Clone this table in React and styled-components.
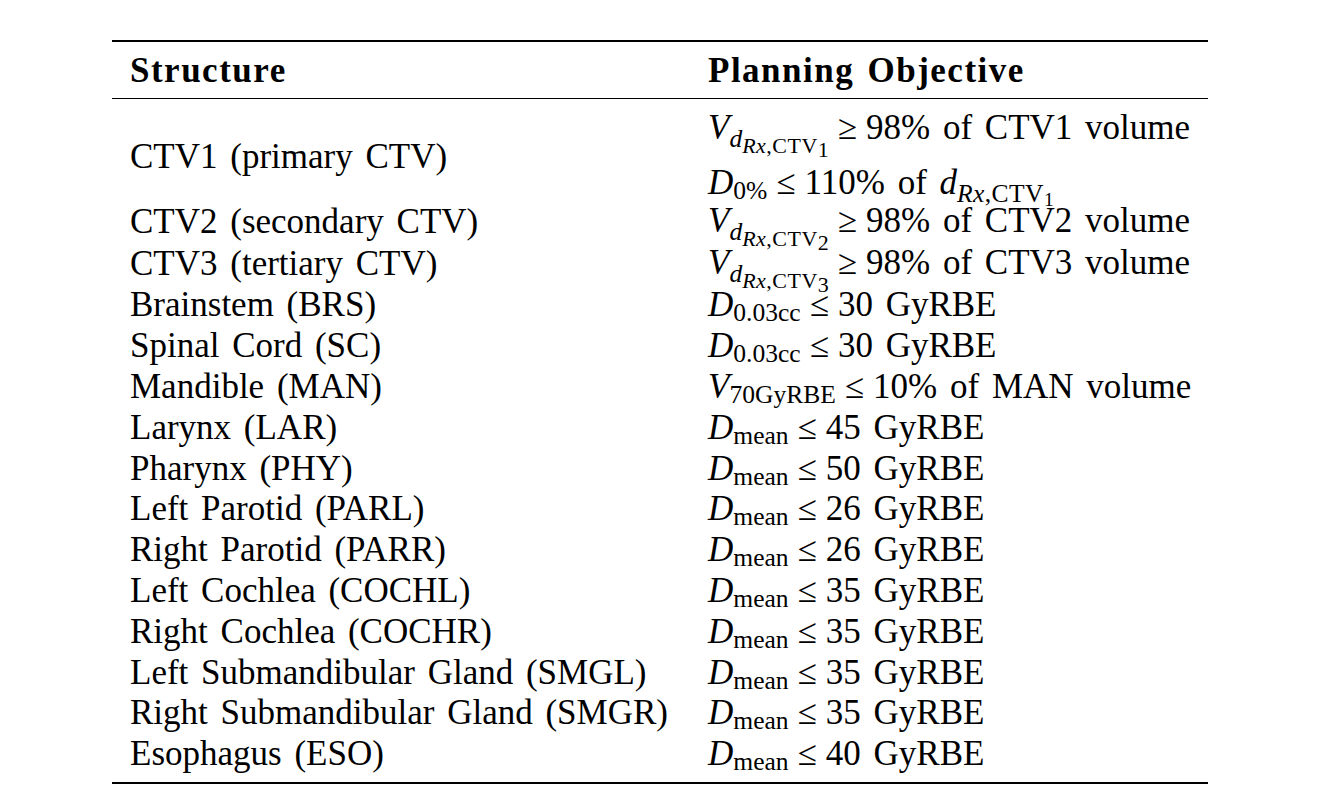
import React from "react";
import styled, { createGlobalStyle } from "styled-components";

const SERIF = `"Liberation Serif", "Times New Roman", Times, serif`;

const Global = createGlobalStyle`
  html, body { margin: 0; padding: 0; background: #fff; }
  body {
    font-family: ${SERIF};
    color: #000;
  }
`;

const Page = styled.div`
  padding: 40px 0 0 112px;
`;

const Table = styled.div`
  width: 1096px;
  border-top: 2px solid #000;
  border-bottom: 2px solid #000;
  font-family: ${SERIF};
  font-size: 35px;
`;

const HeadRow = styled.div`
  display: grid;
  grid-template-columns: 596px 1fr;
  padding: 8px 0 7px;
  line-height: 41px;
  border-bottom: 1px solid #000;
`;

const Body = styled.div`
  padding: 9px 0 7px;
`;

const Row = styled.div`
  display: grid;
  grid-template-columns: 596px 1fr;
  line-height: 40.8px;
  margin-bottom: ${(p) => (p.$tight ? "-3px" : "0")};
`;

const NameCell = styled.div`
  padding-left: 18px;
  padding-top: ${(p) => p.$shift || 0}px;
  white-space: nowrap;
  align-self: center;
`;

const HeadCell = styled.div`
  padding-left: ${(p) => (p.$first ? "18px" : "0")};
  white-space: nowrap;
`;

const ObjCell = styled.div`
  display: flex;
  flex-direction: column;
  gap: 13px;
  white-space: nowrap;
`;

const Line = styled.div``;

/* upright running text */
const Txt = styled.span`
  font-style: normal;
  font-weight: ${(p) => (p.$bold ? 700 : 400)};
  word-spacing: ${(p) => (p.$bold ? "3px" : "4px")};
  letter-spacing: ${(p) => (p.$bold ? "1.5px" : "0")};
`;

const I = styled.span`
  font-style: italic;
`;

const Sub = styled.span`
  font-size: ${(p) => p.$size || 0.73}em;
  vertical-align: ${(p) => p.$drop || -0.2}em;
  letter-spacing: ${(p) => p.$track || 0}px;
  line-height: 0;
`;

const Rel = styled.span`
  margin: 0 9px;
`;

const Vd = ({ n }) => (
  <>
    <I>V</I>
    <Sub $drop={-0.3}>
      <I>d</I>
      <Sub $size={0.86} $drop={-0.3} $track={0.5}>
        <I>Rx</I>,CTV
        <Sub $size={1} $drop={-0.18}>
          {n}
        </Sub>
      </Sub>
    </Sub>
  </>
);

const Dmean = ({ v }) => (
  <>
    <I>D</I>
    <Sub>mean</Sub>
    <Rel>≤</Rel>
    <Txt>{v} GyRBE</Txt>
  </>
);

const D003 = ({ v }) => (
  <>
    <I>D</I>
    <Sub>0.03cc</Sub>
    <Rel>≤</Rel>
    <Txt>{v} GyRBE</Txt>
  </>
);

const Coverage = ({ n }) => (
  <>
    <Vd n={n} />
    <Rel>≥</Rel>
    <Txt>98% of CTV{n} volume</Txt>
  </>
);

const rows = [
  { name: "CTV2 (secondary CTV)", obj: <Coverage n={2} /> },
  { name: "CTV3 (tertiary CTV)", obj: <Coverage n={3} /> },
  { name: "Brainstem (BRS)", obj: <D003 v={30} /> },
  { name: "Spinal Cord (SC)", obj: <D003 v={30} /> },
  {
    name: "Mandible (MAN)",
    obj: (
      <>
        <I>V</I>
        <Sub>70GyRBE</Sub>
        <Rel>≤</Rel>
        <Txt>10% of MAN volume</Txt>
      </>
    ),
  },
  { name: "Larynx (LAR)", obj: <Dmean v={45} /> },
  { name: "Pharynx (PHY)", obj: <Dmean v={50} /> },
  { name: "Left Parotid (PARL)", obj: <Dmean v={26} /> },
  { name: "Right Parotid (PARR)", obj: <Dmean v={26} /> },
  { name: "Left Cochlea (COCHL)", obj: <Dmean v={35} /> },
  { name: "Right Cochlea (COCHR)", obj: <Dmean v={35} /> },
  { name: "Left Submandibular Gland (SMGL)", obj: <Dmean v={35} /> },
  { name: "Right Submandibular Gland (SMGR)", obj: <Dmean v={35} /> },
  { name: "Esophagus (ESO)", obj: <Dmean v={40} /> },
];

export default function App() {
  return (
    <>
      <Global />
      <Page>
        <Table>
          <HeadRow>
            <HeadCell $first>
              <Txt $bold>Structure</Txt>
            </HeadCell>
            <HeadCell>
              <Txt $bold>Planning Objective</Txt>
            </HeadCell>
          </HeadRow>
          <Body>
            <Row $tight>
              <NameCell $shift={3}>
                <Txt>CTV1 (primary CTV)</Txt>
              </NameCell>
              <ObjCell>
                <Line>
                  <Coverage n={1} />
                </Line>
                <Line>
                  <I>D</I>
                  <Sub>0%</Sub>
                  <Rel>≤</Rel>
                  <Txt>110% of </Txt>
                  <I>d</I>
                  <Sub $drop={-0.3} $track={0.4}>
                    <I>Rx</I>,CTV
                    <Sub $size={0.76} $drop={-0.2}>
                      1
                    </Sub>
                  </Sub>
                </Line>
              </ObjCell>
            </Row>
            {rows.map((r) => (
              <Row key={r.name}>
                <NameCell>
                  <Txt>{r.name}</Txt>
                </NameCell>
                <ObjCell>
                  <Line>{r.obj}</Line>
                </ObjCell>
              </Row>
            ))}
          </Body>
        </Table>
      </Page>
    </>
  );
}
